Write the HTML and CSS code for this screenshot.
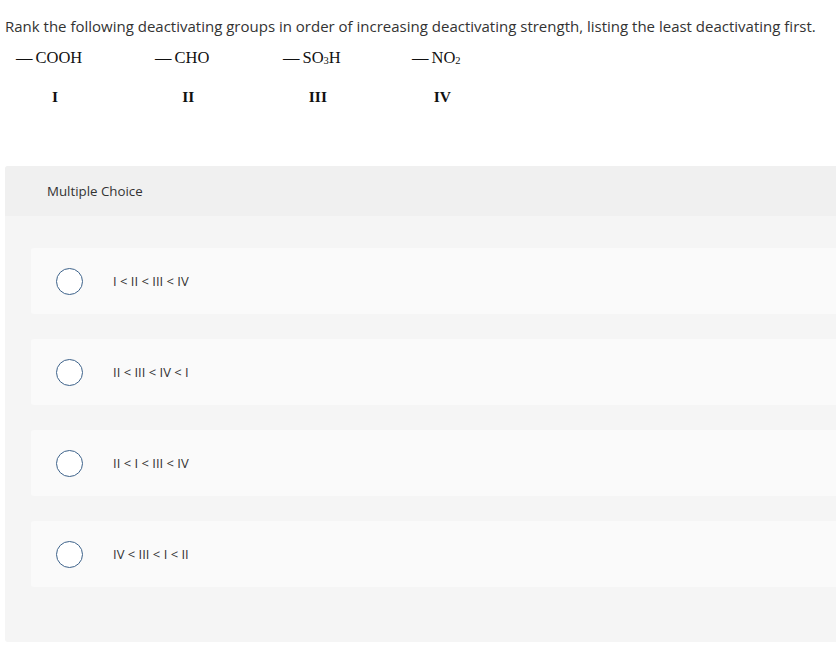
FILE: index.html
```html
<!DOCTYPE html>
<html>
<head>
<meta charset="utf-8">
<link rel="stylesheet" href="styles.css">
</head>
<body>
<div class="page">
  <p class="question">Rank the following deactivating groups in order of increasing deactivating strength, listing the least deactivating first.</p>
  <div class="chem">
    <div class="grp"><span class="formula"><span class="dash">—</span>COOH</span><span class="num">I</span></div>
    <div class="grp"><span class="formula"><span class="dash">—</span>CHO</span><span class="num">II</span></div>
    <div class="grp"><span class="formula"><span class="dash">—</span>SO<sub>3</sub>H</span><span class="num">III</span></div>
    <div class="grp"><span class="formula"><span class="dash">—</span>NO<sub>2</sub></span><span class="num">IV</span></div>
  </div>
  <div class="card">
    <div class="card-head">Multiple Choice</div>
    <div class="card-body">
      <label class="option"><span class="radio"></span><span class="opt-text">I &lt; II &lt; III &lt; IV</span></label>
      <label class="option"><span class="radio"></span><span class="opt-text">II &lt; III &lt; IV &lt; I</span></label>
      <label class="option"><span class="radio"></span><span class="opt-text">II &lt; I &lt; III &lt; IV</span></label>
      <label class="option"><span class="radio"></span><span class="opt-text">IV &lt; III &lt; I &lt; II</span></label>
    </div>
  </div>
</div>
</body>
</html>
```
FILE: styles.css
```css
html, body {
  margin: 0;
  padding: 0;
  background: #ffffff;
  overflow: hidden;
}
.page {
  padding-left: 5px;
  font-family: "Open Sans", Lato, Arial, sans-serif;
  color: #2f2f2f;
}
.question {
  margin: 0;
  padding-top: 16px;
  font-size: 15px;
  line-height: 20px;
  color: #333333;
  white-space: nowrap;
}
.chem {
  display: grid;
  grid-template-columns: 139px 128px 129px auto;
  padding-left: 11px;
  margin-top: 12px;
  font-family: "Liberation Serif", "Times New Roman", serif;
  color: #111111;
}
.grp {
  display: inline-flex;
  flex-direction: column;
  align-items: center;
  justify-self: start;
}
.formula {
  font-size: 16.5px;
  line-height: 20px;
  white-space: nowrap;
}
.dash {
  margin-right: 3px;
}
.formula sub {
  font-size: 10.5px;
  vertical-align: -1px;
  line-height: 0;
}
.num {
  font-weight: bold;
  font-size: 15.5px;
  line-height: 20px;
  margin-top: 19px;
  padding-left: 12px;
}
.card {
  margin-top: 59px;
  width: 840px;
  background: #f5f5f5;
  border-radius: 3px;
}
.card-head {
  height: 50px;
  background: #f0f0f0;
  display: flex;
  align-items: center;
  padding-left: 42px;
  font-size: 13.3px;
  color: #333333;
  border-radius: 3px 3px 0 0;
}
.card-body {
  display: flex;
  flex-direction: column;
  gap: 25px;
  padding: 32px 0 55px 26px;
}
.option {
  height: 66px;
  background: #fafafa;
  border-radius: 3px;
  display: flex;
  align-items: center;
  padding-left: 25px;
}
.radio {
  width: 25px;
  height: 25px;
  border: 1.5px solid #3d628a;
  border-radius: 50%;
  background: #ffffff;
  flex: none;
}
.opt-text {
  margin-left: 30px;
  font-size: 13px;
  color: #333333;
}
```
